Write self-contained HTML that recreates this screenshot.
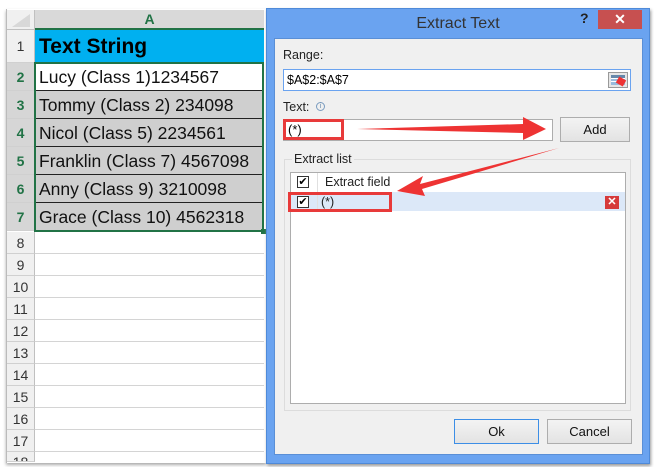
<!DOCTYPE html>
<html><head><meta charset="utf-8"><style>
*{box-sizing:border-box;margin:0;padding:0}
body{width:654px;height:467px;background:#fff;position:relative;overflow:hidden;font-family:"Liberation Sans",sans-serif}
.a{position:absolute}
.rh{position:absolute;left:7px;width:28px;background:#f0f0f0;border-bottom:1px solid #d0d0d0;border-right:1px solid #c0c0c0;text-align:center;font-size:14px;color:#333}
.rl{position:absolute;left:35px;width:229px;border-bottom:1px solid #d4d4d4}
.cell{position:absolute;left:35px;width:229px;background:#cfcfcf;border-bottom:1px solid #222;font-size:17.5px;padding-left:4px;color:#111}
.btn{position:absolute;background:linear-gradient(#f3f3f3,#e3e3e3);border:1px solid #adadad;text-align:center;font-size:13px;color:#111}
</style></head><body>
<div class="a" style="left:6px;top:9px;width:260px;height:454px;border-left:1px solid #bbb;box-shadow:0 2px 3px #aaa"></div>
<div class="a" style="left:7px;top:10px;width:28px;height:20px;background:#f0f0f0;border-right:1px solid #c0c0c0;border-bottom:1px solid #c0c0c0"></div>
<div class="a" style="left:12px;top:14px;width:0;height:0;border-left:18px solid transparent;border-bottom:13px solid #d8d8d8"></div>
<div class="a" style="left:35px;top:10px;width:229px;height:20px;background:#d9d9d9;border-bottom:2px solid #217346;text-align:center;font-size:14px;font-weight:bold;color:#217346;line-height:18px">A</div>
<div class="rh" style="top:30px;height:33px;line-height:33px">1</div>
<div class="a" style="left:35px;top:30px;width:229px;height:33px;background:#00b0f0;font-size:21px;font-weight:bold;padding-left:4px;line-height:33px">Text String</div>
<div class="rh" style="top:63px;height:28px;line-height:28px;background:#d6d6d6;color:#217346;font-weight:bold">2</div>
<div class="rh" style="top:91px;height:28px;line-height:28px;background:#d6d6d6;color:#217346;font-weight:bold">3</div>
<div class="rh" style="top:119px;height:28px;line-height:28px;background:#d6d6d6;color:#217346;font-weight:bold">4</div>
<div class="rh" style="top:147px;height:28px;line-height:28px;background:#d6d6d6;color:#217346;font-weight:bold">5</div>
<div class="rh" style="top:175px;height:28px;line-height:28px;background:#d6d6d6;color:#217346;font-weight:bold">6</div>
<div class="rh" style="top:203px;height:28px;line-height:28px;background:#d6d6d6;color:#217346;font-weight:bold">7</div>
<div class="cell" style="top:63px;height:28px;line-height:28px;background:#fff">Lucy (Class 1)1234567</div>
<div class="cell" style="top:91px;height:28px;line-height:28px">Tommy (Class 2) 234098</div>
<div class="cell" style="top:119px;height:28px;line-height:28px">Nicol (Class 5) 2234561</div>
<div class="cell" style="top:147px;height:28px;line-height:28px">Franklin (Class 7) 4567098</div>
<div class="cell" style="top:175px;height:28px;line-height:28px">Anny (Class 9) 3210098</div>
<div class="cell" style="top:203px;height:28px;line-height:28px">Grace (Class 10) 4562318</div>
<div class="a" style="left:34px;top:62px;width:230px;height:170px;border:2px solid #217346"></div>
<div class="a" style="left:261px;top:229px;width:5px;height:5px;background:#217346"></div>
<div class="rh" style="top:232px;height:22px;line-height:22px">8</div><div class="rl" style="top:232px;height:22px"></div>
<div class="rh" style="top:254px;height:22px;line-height:22px">9</div><div class="rl" style="top:254px;height:22px"></div>
<div class="rh" style="top:276px;height:22px;line-height:22px">10</div><div class="rl" style="top:276px;height:22px"></div>
<div class="rh" style="top:298px;height:22px;line-height:22px">11</div><div class="rl" style="top:298px;height:22px"></div>
<div class="rh" style="top:320px;height:22px;line-height:22px">12</div><div class="rl" style="top:320px;height:22px"></div>
<div class="rh" style="top:342px;height:22px;line-height:22px">13</div><div class="rl" style="top:342px;height:22px"></div>
<div class="rh" style="top:364px;height:22px;line-height:22px">14</div><div class="rl" style="top:364px;height:22px"></div>
<div class="rh" style="top:386px;height:22px;line-height:22px">15</div><div class="rl" style="top:386px;height:22px"></div>
<div class="rh" style="top:408px;height:22px;line-height:22px">16</div><div class="rl" style="top:408px;height:22px"></div>
<div class="rh" style="top:430px;height:22px;line-height:22px">17</div><div class="rl" style="top:430px;height:22px"></div>
<div class="rh" style="top:452px;height:10px;line-height:20px;overflow:hidden">18</div>
<div class="a" style="left:266px;top:8px;width:384px;height:456px;background:#6aa3f0;border:1px solid #4f8ad8;box-shadow:1px 2px 3px #999"></div>
<div class="a" style="left:266px;top:10px;width:384px;height:28px;text-align:center;font-size:16px;color:#333;line-height:28px">Extract Text</div>
<div class="a" style="left:580px;top:10px;font-size:14px;font-weight:bold;color:#222">?</div>
<div class="a" style="left:598px;top:10px;width:44px;height:19px;background:#c75050;color:#fff;text-align:center;font-size:14px;line-height:19px;font-weight:bold">✕</div>
<div class="a" style="left:274px;top:38px;width:369px;height:417px;background:#f0f0f0;border:1px solid #5a8fd6"></div>
<div class="a" style="left:283px;top:48px;font-size:12.5px;color:#222">Range:</div>
<div class="a" style="left:283px;top:69px;width:348px;height:22px;background:#fff;border:1px solid #6aa3f0;font-size:12.5px;line-height:20px;padding-left:3px">$A$2:$A$7</div>
<div class="a" style="left:608px;top:72px;width:20px;height:16px;background:#e6e6e6;border:1px solid #999"></div>
<div class="a" style="left:611px;top:75px;width:14px;height:10px;background:linear-gradient(#68a 0 3px,#fff 3px 4px,#9bd 4px 6px,#fff 6px 7px,#9bd 7px)"></div>
<div class="a" style="left:617px;top:78px;width:8px;height:7px;background:#e33;transform:rotate(30deg)"></div>
<div class="a" style="left:283px;top:100px;font-size:12.5px;color:#222">Text:</div>
<div class="a" style="left:316px;top:102px;width:9px;height:9px;border:1px solid #7a9cc0;border-radius:50%;font-size:7px;text-align:center;line-height:8px;color:#68a">i</div>
<div class="a" style="left:283px;top:119px;width:270px;height:22px;background:#fff;border:1px solid #adadad"></div>
<div class="a" style="left:283px;top:119px;width:61px;height:21px;border:3px solid #e83a3a;font-size:13px;line-height:15px;padding-left:2px">(*)</div>
<div class="btn" style="left:560px;top:117px;width:70px;height:25px;line-height:23px">Add</div>
<div class="a" style="left:284px;top:159px;width:347px;height:252px;border:1px solid #dcdcdc"></div>
<div class="a" style="left:292px;top:152px;background:#f0f0f0;font-size:12.5px;color:#222;padding:0 2px">Extract list</div>
<div class="a" style="left:290px;top:172px;width:336px;height:232px;background:#fff;border:1px solid #adadad"></div>
<div class="a" style="left:291px;top:192px;width:334px;height:19px;background:#dce8f8"></div>
<div class="a" style="left:317px;top:173px;width:1px;height:38px;background:#e0e0e0"></div>
<div class="a" style="left:297px;top:176px;width:12px;height:12px;border:1px solid #333;background:#fff;font-size:11px;line-height:10px;text-align:center">✔</div>
<div class="a" style="left:297px;top:196px;width:12px;height:12px;border:1px solid #333;background:#fff;font-size:11px;line-height:10px;text-align:center">✔</div>
<div class="a" style="left:325px;top:175px;font-size:12.5px;color:#222">Extract field</div>
<div class="a" style="left:321px;top:195px;font-size:12.5px;color:#222">(*)</div>
<div class="a" style="left:288px;top:192px;width:104px;height:20px;border:3px solid #e83a3a"></div>
<div class="a" style="left:605px;top:196px;width:14px;height:13px;background:#d63a3a;color:#fff;font-size:11px;line-height:13px;text-align:center;font-weight:bold">✕</div>
<div class="btn" style="left:454px;top:419px;width:85px;height:25px;line-height:23px;border-color:#3c8ee6">Ok</div>
<div class="btn" style="left:547px;top:419px;width:85px;height:25px;line-height:23px">Cancel</div>
<svg class="a" style="left:0;top:0" width="654" height="467">
<polygon points="357,129 523,124 523,117 546,129 523,140 523,133" fill="#ee3333"/>
<polygon points="559,148 420,184 423,176 397,191 425,196 422,189" fill="#ee3333"/>
</svg>
</body></html>
